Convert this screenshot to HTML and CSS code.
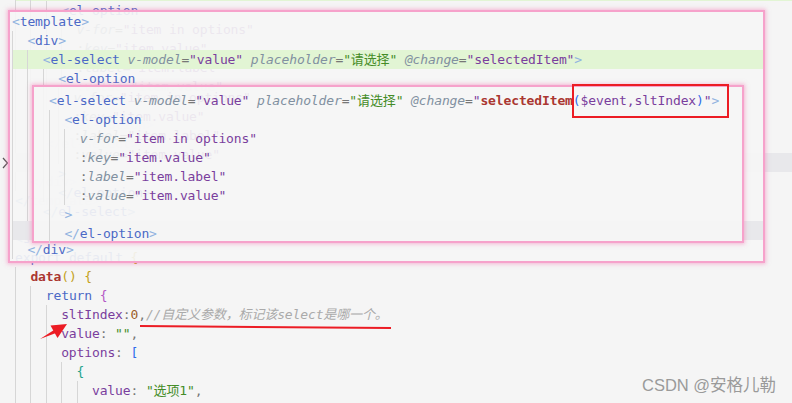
FILE: index.html
```html
<!DOCTYPE html>
<html>
<head>
<meta charset="utf-8">
<link rel="stylesheet" href="styles.css">
</head>
<body>
<div class="page">

  <!-- the editor underneath -->
  <div class="editor">
    <div class="ln sel"><span class="gut"></span><i class="g"></i><i class="g"></i><span class="p">&lt;</span><span class="t">el-select</span> <span class="a">v-model</span><span class="o">=</span><span class="v">"value"</span> <span class="a">placeholder</span><span class="o">=</span><span class="s">"请选择"</span> <span class="a">@change</span><span class="o">=</span><span class="v">"selectedItem"</span><span class="p">&gt;</span></div>
    <div class="ln"><span class="gut"></span><i class="g"></i><i class="g"></i><i class="g"></i><span class="p">&lt;</span><span class="t">el-option</span></div>
    <div class="ln"><span class="gut"></span><i class="g"></i><i class="g"></i><i class="g"></i><i class="g"></i><span class="a">v-for</span><span class="o">=</span><span class="v">"item in options"</span></div>
    <div class="ln"><span class="gut"></span><i class="g"></i><i class="g"></i><i class="g"></i><i class="g"></i><span class="o">:</span><span class="a">key</span><span class="o">=</span><span class="v">"item.value"</span></div>
    <div class="ln"><span class="gut"></span><i class="g"></i><i class="g"></i><i class="g"></i><i class="g"></i><span class="o">:</span><span class="a">label</span><span class="o">=</span><span class="v">"item.label"</span></div>
    <div class="ln"><span class="gut"></span><i class="g"></i><i class="g"></i><i class="g"></i><i class="g"></i><span class="o">:</span><span class="a">value</span><span class="o">=</span><span class="v">"item.value"</span></div>
    <div class="ln"><span class="gut"></span><i class="g"></i><i class="g"></i><i class="g"></i><span class="p">&gt;</span></div>
    <div class="ln"><span class="gut"></span><i class="g"></i><i class="g"></i><i class="g"></i><span class="p">&lt;/</span><span class="t">el-option</span><span class="p">&gt;</span></div>
    <div class="ln"><span class="gut"></span><i class="g"></i><i class="g"></i><span class="p">&lt;/</span><span class="t">el-select</span><span class="p">&gt;</span></div>
    <div class="ln cur"><span class="gut"><svg class="fold" width="8" height="12" viewBox="0 0 8 12"><path d="M2 1 L6.5 6 L2 11" fill="none" stroke="#555" stroke-width="1.2"/></svg></span></div>
    <div class="ln"><span class="gut"></span><i class="g"></i><span class="p">&lt;/</span><span class="t">div</span><span class="p">&gt;</span></div>
    <div class="ln"><span class="gut"></span><span class="p">&lt;/</span><span class="t">template</span><span class="p">&gt;</span></div>
    <div class="ln"><span class="gut"></span></div>
    <div class="ln"><span class="gut"></span><span class="p">&lt;</span><span class="t">script</span><span class="p">&gt;</span></div>
    <div class="ln"><span class="gut"></span><span class="k">export</span> <span class="k">default</span> <span class="b1">{</span></div>
    <div class="ln"><span class="gut"></span><i class="g"></i><span class="f">data</span><span class="b1">()</span> <span class="b1">{</span></div>
    <div class="ln"><span class="gut"></span><i class="g"></i><i class="g"></i><span class="k">return</span> <span class="b2">{</span></div>
    <div class="ln"><span class="gut"></span><i class="g"></i><i class="g"></i><i class="g"></i><span class="v">sltIndex</span><span class="o">:</span><span class="n">0</span><span class="o">,</span><span class="c">//自定义参数，标记该select是哪一个。</span></div>
    <div class="ln"><span class="gut"></span><i class="g"></i><i class="g"></i><i class="g"></i><span class="v">value</span><span class="o">:</span> <span class="s">""</span><span class="o">,</span></div>
    <div class="ln"><span class="gut"></span><i class="g"></i><i class="g"></i><i class="g"></i><span class="v">options</span><span class="o">:</span> <span class="b3">[</span></div>
    <div class="ln"><span class="gut"></span><i class="g"></i><i class="g"></i><i class="g"></i><i class="g"></i><span class="b4">{</span></div>
    <div class="ln"><span class="gut"></span><i class="g"></i><i class="g"></i><i class="g"></i><i class="g"></i><i class="g"></i><span class="v">value</span><span class="o">:</span> <span class="s">"选项1"</span><span class="o">,</span></div>
    <div class="ln"><span class="gut"></span><i class="g"></i><i class="g"></i><i class="g"></i><i class="g"></i><i class="g"></i><span class="v">label</span><span class="o">:</span> <span class="s">"黄金糕"</span><span class="o">,</span></div>
  </div>

  <!-- first pasted screenshot -->
  <div class="shot shot-outer">
    <div class="ln"><span class="p">&lt;</span><span class="t">template</span><span class="p">&gt;</span></div>
    <div class="ln"><i class="g"></i><span class="p">&lt;</span><span class="t">div</span><span class="p">&gt;</span></div>
    <div class="ln sel"><i class="g"></i><i class="g"></i><span class="p">&lt;</span><span class="t">el-select</span> <span class="a">v-model</span><span class="o">=</span><span class="v">"value"</span> <span class="a">placeholder</span><span class="o">=</span><span class="s">"请选择"</span> <span class="a">@change</span><span class="o">=</span><span class="v">"selectedItem"</span><span class="p">&gt;</span></div>
    <div class="ln"><i class="g"></i><i class="g"></i><i class="g"></i><span class="p">&lt;</span><span class="t">el-option</span></div>
    <div class="ln"><i class="g"></i><i class="g"></i><i class="g"></i><i class="g"></i><span class="a">v-for</span><span class="o">=</span><span class="v">"item in options"</span></div>
    <div class="ln"><i class="g"></i><i class="g"></i><i class="g"></i><i class="g"></i><span class="o">:</span><span class="a">key</span><span class="o">=</span><span class="v">"item.value"</span></div>
    <div class="ln"><i class="g"></i><i class="g"></i><i class="g"></i><i class="g"></i><span class="o">:</span><span class="a">label</span><span class="o">=</span><span class="v">"item.label"</span></div>
    <div class="ln"><i class="g"></i><i class="g"></i><i class="g"></i><i class="g"></i><span class="o">:</span><span class="a">value</span><span class="o">=</span><span class="v">"item.value"</span></div>
    <div class="ln"><i class="g"></i><i class="g"></i><i class="g"></i><span class="p">&gt;</span></div>
    <div class="ln"><i class="g"></i><i class="g"></i><i class="g"></i><span class="p">&lt;/</span><span class="t">el-option</span><span class="p">&gt;</span></div>
    <div class="ln"><i class="g"></i><i class="g"></i><span class="p">&lt;/</span><span class="t">el-select</span><span class="p">&gt;</span></div>
    <div class="ln cur"><i class="g"></i></div>
    <div class="ln"><i class="g"></i><span class="p">&lt;/</span><span class="t">div</span><span class="p">&gt;</span></div>
  </div>

  <!-- second pasted screenshot -->
  <div class="shot shot-inner">
    <div class="ln"><span class="p">&lt;</span><span class="t">el-select</span> <span class="a">v-model</span><span class="o">=</span><span class="v">"value"</span> <span class="a">placeholder</span><span class="o">=</span><span class="s">"请选择"</span> <span class="a">@change</span><span class="o">=</span><span class="v">"</span><span class="f">selectedItem</span><span class="b3">(</span><span class="v">$event,sltIndex</span><span class="b3">)</span><span class="v">"</span><span class="p">&gt;</span></div>
    <div class="ln"><i class="g"></i><span class="p">&lt;</span><span class="t">el-option</span></div>
    <div class="ln"><i class="g"></i><i class="g"></i><span class="a">v-for</span><span class="o">=</span><span class="v">"item in options"</span></div>
    <div class="ln"><i class="g"></i><i class="g"></i><span class="o">:</span><span class="a">key</span><span class="o">=</span><span class="v">"item.value"</span></div>
    <div class="ln"><i class="g"></i><i class="g"></i><span class="o">:</span><span class="a">label</span><span class="o">=</span><span class="v">"item.label"</span></div>
    <div class="ln"><i class="g"></i><i class="g"></i><span class="o">:</span><span class="a">value</span><span class="o">=</span><span class="v">"item.value"</span></div>
    <div class="ln"><i class="g"></i><span class="p">&gt;</span></div>
    <div class="ln"><i class="g"></i><span class="p">&lt;/</span><span class="t">el-option</span><span class="p">&gt;</span></div>
  </div>

  <!-- annotations -->
  <div class="mark"></div>
  <svg class="ink" width="792" height="403" viewBox="0 0 792 403">
    <path d="M140 326 L391 328" stroke="#ec1c24" stroke-width="2" fill="none"/>
    <path d="M40 339 L54 330 L56 333 Z" fill="#ec1c24"/>
    <path d="M67 324 L50.5 325.5 L57.5 338 Z" fill="#ec1c24"/>
  </svg>

  <div class="wm">CSDN @安格儿勒</div>
</div>
</body>
</html>
```

FILE: styles.css
```css
body {
  margin: 0;
  background: #f5f5f5;
  font-family: "DejaVu Sans Mono", "Noto Sans CJK SC", monospace;
  font-size: 13px;
  letter-spacing: -0.126px;
  color: #333333;
}
.page {
  position: relative;
  width: 792px;
  height: 403px;
  overflow: hidden;
}
.editor {
  margin-top: -18px;
}
.ln {
  height: 19px;
  line-height: 19px;
  white-space: pre;
}
.ln.sel {
  background: #e2f5d4;
}
.ln.cur {
  background: #e8e8eb;
}
.gut {
  display: inline-block;
  width: 15px;
  height: 19px;
  vertical-align: top;
  background: #f5f5f5;
}
.fold {
  display: block;
  margin: 4px 0 0 1px;
}
.g {
  display: inline-block;
  width: 15.4px;
  height: 19px;
  vertical-align: top;
  box-sizing: border-box;
  border-left: 1px solid #d6d6d6;
}

/* syntax colours */
.p { color: #91b3e0; }
.t { color: #4b69c6; }
.a { color: #8190a0; font-style: italic; }
.o { color: #777777; }
.s { color: #448c27; }
.v { color: #7a3e9d; }
.f { color: #aa3731; font-weight: bold; }
.k { color: #4b69c6; }
.n { color: #9c5d27; }
.c { color: #aaaaaa; font-style: italic; }
.b1 { color: #c4a11a; }
.b2 { color: #b458c6; }
.b3 { color: #2f6bec; }
.b4 { color: #23a38a; }

/* pasted screenshots */
.shot {
  position: absolute;
  box-sizing: border-box;
  border: 2px solid #f6a2cb;
  box-shadow: 0 0 4px 1px rgba(244, 120, 180, 0.5);
  background: rgba(245, 245, 245, 0.92);
}
.shot-outer {
  left: 8px;
  top: 10px;
  width: 757px;
  height: 253px;
  padding-left: 2px;
}
.shot-inner {
  left: 32px;
  top: 85px;
  width: 712px;
  height: 158px;
  padding: 3.5px 0 0 15px;
}

.mark {
  position: absolute;
  left: 572px;
  top: 84px;
  width: 157px;
  height: 34px;
  box-sizing: border-box;
  border: 2px solid #ec1c24;
}
.ink {
  position: absolute;
  left: 0;
  top: 0;
  pointer-events: none;
}
.wm {
  position: absolute;
  left: 642px;
  top: 375px;
  font-family: "Liberation Sans", "Noto Sans CJK SC", sans-serif;
  font-size: 16.5px;
  letter-spacing: 0;
  line-height: 20px;
  color: #9a9a9a;
}
```
